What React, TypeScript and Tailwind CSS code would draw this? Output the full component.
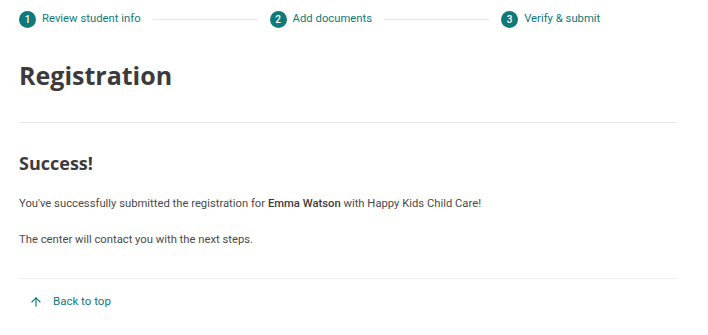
import { ArrowUp } from "lucide-react";

const steps = ["Review student info", "Add documents", "Verify & submit"];

export default function App() {
  return (
    <div className="min-h-screen bg-white font-['Roboto',sans-serif] text-[#4a4a4a]">
      <div className="pl-[19px] pr-[31px]">
        {/* Stepper */}
        <div className="flex items-center pt-[6px] h-[32px]">
          {steps.map((s, i) => (
            <div key={s} className="flex items-center">
              <div className="flex items-center gap-[6px]">
                <span className="flex h-[17px] w-[17px] items-center justify-center rounded-full bg-[#0e7a7a] text-[10px] font-medium text-white">
                  {i + 1}
                </span>
                <span className="text-[11.3px] text-[#0e7a7a]">{s}</span>
              </div>
              {i < steps.length - 1 && (
                <div className="mx-3 h-px w-[105px] bg-[#e6e6e6]" />
              )}
            </div>
          ))}
        </div>

        <h1 className="mt-[27px] font-['Open_Sans',sans-serif] text-[25px] font-bold leading-[32px] text-[#3b3b3b]">
          Registration
        </h1>

        <div className="mt-[31px] h-px bg-[#e8e8e8]" />

        <h2 className="mt-[28px] font-['Open_Sans',sans-serif] text-[18px] font-bold leading-[24px] text-[#3b3b3b]">
          Success!
        </h2>

        <p className="mt-[21px] text-[11.25px] leading-[16px]">
          You've successfully submitted the registration for{" "}
          <span className="font-medium text-[#3b3b3b]">Emma Watson</span> with
          Happy Kids Child Care!
        </p>
        <p className="mt-[20px] text-[11.25px] leading-[16px]">
          The center will contact you with the next steps.
        </p>

        <div className="mt-[30px] h-px bg-[#efefef]" />

        <a
          href="#"
          className="mt-[14px] ml-[10px] flex items-center gap-[10px] text-[11.5px] text-[#0e7a7a]"
        >
          <ArrowUp className="h-[14px] w-[14px]" strokeWidth={2} />
          <span>Back to top</span>
        </a>
      </div>
    </div>
  );
}
